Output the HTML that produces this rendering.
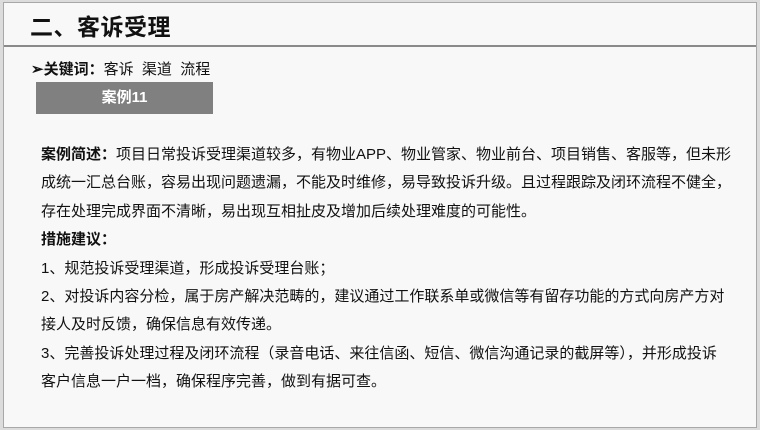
<!DOCTYPE html>
<html><head><meta charset="utf-8"><style>
html,body{margin:0;padding:0;width:760px;height:430px;background:#dcdcdc;overflow:hidden;font-family:"Liberation Sans","Noto Sans CJK SC",sans-serif;color:#111}
.frame{position:absolute;left:3px;top:2px;width:752px;height:424px;background:#f8f8f8;border:1px solid #a8a8a8}
.title{position:absolute;left:26px;top:5px;font-size:23px;font-weight:bold;letter-spacing:0.5px}
.hline{position:absolute;left:0;top:42px;width:752px;height:2px;background:#8a8a8a}
.kw{position:absolute;left:27px;top:55px;font-size:15px}
.box{position:absolute;left:32px;top:79px;width:177px;height:32px;background:#808080;color:#fff;font-weight:bold;font-size:15px;text-align:center;line-height:32px}
.body{position:absolute;left:37px;top:138px;width:720px;font-size:15px;line-height:28.4px;white-space:nowrap}
.body p{margin:0}
</style></head><body>
<div class="frame">
<div class="title">二、客诉受理</div>
<div class="hline"></div>
<div class="kw"><b>➢关键词：</b>客诉&nbsp; 渠道&nbsp; 流程</div>
<div class="box">案例11</div>
<div class="body">
<p><b>案例简述：</b>项目日常投诉受理渠道较多，有物业APP、物业管家、物业前台、项目销售、客服等，但未形<br>成统一汇总台账，容易出现问题遗漏，不能及时维修，易导致投诉升级。且过程跟踪及闭环流程不健全，<br>存在处理完成界面不清晰，易出现互相扯皮及增加后续处理难度的可能性。</p>
<p><b>措施建议：</b></p>
<p>1、规范投诉受理渠道，形成投诉受理台账；</p>
<p>2、对投诉内容分检，属于房产解决范畴的，建议通过工作联系单或微信等有留存功能的方式向房产方对<br>接人及时反馈，确保信息有效传递。</p>
<p>3、完善投诉处理过程及闭环流程（录音电话、来往信函、短信、微信沟通记录的截屏等），并形成投诉<br>客户信息一户一档，确保程序完善，做到有据可查。</p>
</div>
</div>
</body></html>
